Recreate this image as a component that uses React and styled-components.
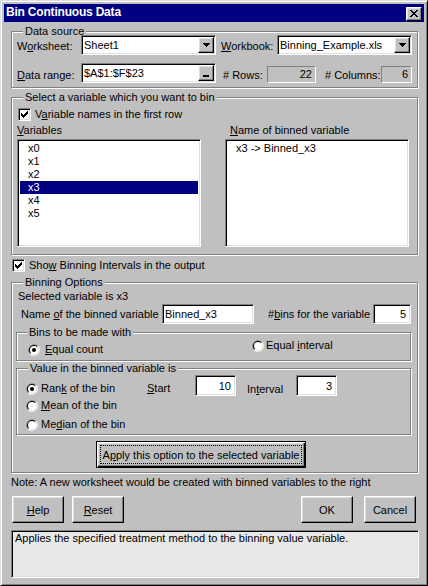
import React from 'react';
import styled, { createGlobalStyle, css } from 'styled-components';

const GlobalStyle = createGlobalStyle`
    html, body {
        margin: 0;
        padding: 0;
        background: #c0c0c0;
    }
    body {
        font-family: "Liberation Sans", Arial, sans-serif;
        font-size: 11px;
        color: #000;
    }
`;

const sunken = css`
    box-sizing: border-box;
    border: 1px solid;
    border-color: #808080 #fff #fff #808080;
    box-shadow: inset 1px 1px 0 #000, inset -1px -1px 0 #dfdfdf;
`;

const raised = css`
    box-sizing: border-box;
    border: 1px solid;
    border-color: #fff #000 #000 #fff;
    box-shadow: inset -1px -1px 0 #808080, inset 1px 1px 0 #dfdfdf;
`;

const Window = styled.div`
    box-sizing: border-box;
    width: 428px;
    height: 586px;
    padding: 3px;
    background: #c0c0c0;
    border: 1px solid;
    border-color: #dfdfdf #000 #000 #dfdfdf;
    box-shadow: inset 1px 1px 0 #fff, inset -1px -1px 0 #808080;
    display: flex;
    flex-direction: column;
`;

const TitleBar = styled.div`
    height: 18px;
    flex: none;
    display: flex;
    align-items: center;
    justify-content: space-between;
    padding: 0 2px;
    background: #000080;
    color: #fff;
    font-weight: bold;
    font-size: 12px;
    letter-spacing: -0.2px;
`;

const TitleText = styled.span`
    padding-bottom: 2px;
`;

const CloseButton = styled.div`
    ${raised};
    width: 16px;
    height: 14px;
    background: #c0c0c0;
    display: flex;
    align-items: center;
    justify-content: center;
    margin-top: 1px;
`;

const Group = styled.fieldset`
    box-sizing: border-box;
    min-width: 0;
    margin: ${({ $mt }) => $mt || 0}px 0 0 ${({ $ml }) => $ml || 0}px;
    width: ${({ $w }) => $w}px;
    padding: 0 4px ${({ $pb }) => $pb || 0}px ${({ $pl }) => $pl || 0}px;
    border: 1px solid #808080;
    box-shadow: inset 1px 1px 0 #fff, 1px 1px 0 #fff;
`;

const Legend = styled.legend`
    padding: 0 2px;
    margin-left: ${({ $ml }) => $ml}px;
    line-height: 8px;
    background: #c0c0c0;
`;

const Key = styled.span`
    text-decoration: underline;
`;

const FormRow = styled.div`
    display: flex;
    align-items: ${({ $align }) => $align || 'flex-start'};
    margin-top: ${({ $mt }) => $mt || 0}px;
    margin-left: ${({ $ml }) => $ml || 0}px;
`;

const FieldLabel = styled.div`
    flex: none;
    width: ${({ $w }) => $w}px;
    margin-left: ${({ $ml }) => $ml || 0}px;
    margin-top: ${({ $mt }) => $mt || 0}px;
    line-height: 13px;
    white-space: nowrap;
`;

const Field = styled.div`
    ${sunken};
    flex: none;
    width: ${({ $w }) => $w}px;
    height: ${({ $h }) => $h || 20}px;
    padding: 1px;
    background: #fff;
    display: flex;
    align-items: center;
`;

const FieldText = styled.div`
    flex: 1;
    padding: 0 ${({ $pr }) => $pr || 1}px 0 ${({ $pl }) => $pl || 1}px;
    text-align: ${({ $align }) => $align || 'left'};
    white-space: nowrap;
    overflow: hidden;
`;

const FieldButton = styled.div`
    ${raised};
    flex: none;
    width: 16px;
    height: 16px;
    background: #c0c0c0;
    display: flex;
    align-items: center;
    justify-content: center;
`;

const ReadBox = styled.div`
    box-sizing: border-box;
    flex: none;
    width: ${({ $w }) => $w}px;
    height: 17px;
    margin-top: 3px;
    border: 1px solid;
    border-color: #808080 #fff #fff #808080;
    padding-right: 3px;
    line-height: 15px;
    text-align: right;
`;

const Columns = styled.div`
    display: flex;
    gap: 24px;
    margin-top: 3px;
`;

const ListColumn = styled.div`
    display: flex;
    flex-direction: column;
`;

const ListCaption = styled.div`
    line-height: 13px;
    margin-left: ${({ $ml }) => $ml || 0}px;
    margin-bottom: 2px;
`;

const ListBox = styled.div`
    ${sunken};
    width: 184px;
    height: 108px;
    padding: 2px;
    background: #fff;
`;

const ListItem = styled.div`
    height: 13px;
    line-height: 13px;
    padding-left: 8px;
    background: ${({ $selected }) => ($selected ? '#000080' : 'transparent')};
    color: ${({ $selected }) => ($selected ? '#fff' : '#000')};
`;

const CheckRow = styled.label`
    display: flex;
    align-items: center;
    gap: 4px;
    height: 13px;
    line-height: 13px;
    margin-top: ${({ $mt }) => $mt || 0}px;
    margin-left: ${({ $ml }) => $ml || 0}px;
`;

const CheckBox = styled.span`
    ${sunken};
    flex: none;
    width: 13px;
    height: 13px;
    background: #fff;
    display: flex;
    align-items: center;
    justify-content: center;
`;

const Text = styled.div`
    line-height: 13px;
    margin-top: ${({ $mt }) => $mt || 0}px;
    margin-left: ${({ $ml }) => $ml || 0}px;
    white-space: nowrap;
`;

const BinsRow = styled.div`
    display: grid;
    grid-template-columns: 227px 1fr;
    align-items: start;
    padding-top: 3px;
`;

const RadioItem = styled.div`
    display: flex;
    align-items: center;
    gap: ${({ $gap }) => $gap || 4}px;
    height: 13px;
    line-height: 13px;
    margin-top: ${({ $mt }) => $mt || 0}px;
    margin-left: ${({ $ml }) => $ml || 0}px;
    white-space: nowrap;
`;

const ValueRow = styled.div`
    display: flex;
    align-items: flex-start;
    padding-top: 3px;
`;

const RadioColumn = styled.div`
    flex: none;
    width: 121px;
    padding-left: 1px;
    display: flex;
    flex-direction: column;
`;

const ApplyButton = styled.button`
    box-sizing: border-box;
    width: 210px;
    height: 27px;
    margin: 6px 0 0 80px;
    padding: 3px;
    font: inherit;
    color: #000;
    background: #c0c0c0;
    border: 1px solid #000;
    box-shadow: inset 1px 1px 0 #fff, inset -1px -1px 0 #000, inset -2px -2px 0 #808080, inset 2px 2px 0 #dfdfdf;
    display: flex;
`;

const FocusRect = styled.span`
    flex: 1;
    border: 1px dotted #000;
    display: flex;
    align-items: center;
    justify-content: center;
`;

const Note = styled.div`
    margin: 3px 0 0 7px;
    line-height: 13px;
    white-space: nowrap;
`;

const ButtonBar = styled.div`
    display: flex;
    margin-top: 7px;
    padding: 0 8px;
`;

const Button = styled.button`
    ${raised};
    width: 52px;
    height: 27px;
    padding: 0;
    margin-left: ${({ $ml }) => ($ml === 'auto' ? 'auto' : `${$ml || 0}px`)};
    font: inherit;
    color: #000;
    background: #c0c0c0;
`;

const StatusBox = styled.div`
    ${sunken};
    width: 408px;
    height: 48px;
    margin: 7px 0 0 7px;
    padding: 1px 3px;
    background: #e8e8e8;
    line-height: 13px;
`;

const DropArrow = () => (
    <svg width="7" height="4" viewBox="0 0 7 4" shapeRendering="crispEdges">
        <path d="M0 0h7v1h-7z M1 1h5v1h-5z M2 2h3v1h-3z M3 3h1v1h-1z" fill="#000" />
    </svg>
);

const CollapseGlyph = () => (
    <svg width="6" height="10" viewBox="0 0 6 10" shapeRendering="crispEdges">
        <path d="M0 7h6v2h-6z" fill="#000" />
    </svg>
);

const CloseGlyph = () => (
    <svg width="8" height="7" viewBox="0 0 8 7" shapeRendering="crispEdges">
        <path
            d="M0 0h2v1h-2z M6 0h2v1h-2z M1 1h2v1h-2z M5 1h2v1h-2z M2 2h4v1h-4z M3 3h2v1h-2z M2 4h4v1h-4z M1 5h2v1h-2z M5 5h2v1h-2z M0 6h2v1h-2z M6 6h2v1h-2z"
            fill="#000"
        />
    </svg>
);

const CheckGlyph = () => (
    <svg width="7" height="7" viewBox="0 0 7 7" shapeRendering="crispEdges">
        <path
            d="M6 0h1v1h-1z M5 1h2v1h-2z M0 2h1v1h-1z M4 2h3v1h-3z M0 3h2v1h-2z M3 3h3v1h-3z M0 4h5v1h-5z M1 5h3v1h-3z M2 6h1v1h-1z"
            fill="#000"
        />
    </svg>
);

const Radio = ({ checked }) => (
    <svg width="12" height="12" viewBox="0 0 12 12" style={{ flex: 'none' }}>
        <path d="M1.76 10.24A6 6 0 0 1 10.24 1.76Z" fill="#808080" />
        <path d="M10.24 1.76A6 6 0 0 1 1.76 10.24Z" fill="#fff" />
        <circle cx="6" cy="6" r="5" fill="#dfdfdf" />
        <path d="M2.46 9.54A5 5 0 0 1 9.54 2.46Z" fill="#000" />
        <circle cx="6" cy="6" r="4" fill="#fff" />
        {checked && <circle cx="6" cy="6" r="2" fill="#000" />}
    </svg>
);

const Combo = ({ value }) => (
    <Field $w={135}>
        <FieldText $pl={1}>{value}</FieldText>
        <FieldButton>
            <DropArrow />
        </FieldButton>
    </Field>
);

const App = () => {
    const variables = ['x0', 'x1', 'x2', 'x3', 'x4', 'x5'];

    return (
        <>
            <GlobalStyle />
            <Window>
                <TitleBar>
                    <TitleText>Bin Continuous Data</TitleText>
                    <CloseButton>
                        <CloseGlyph />
                    </CloseButton>
                </TitleBar>

                <Group $mt={5} $ml={7} $w={407} $pl={5} $pb={4}>
                    <Legend $ml={6}>Data source</Legend>
                    <FormRow>
                        <FieldLabel $w={64} $mt={5}>W<Key>o</Key>rksheet:</FieldLabel>
                        <Combo value="Sheet1" />
                        <FieldLabel $w={56} $ml={5} $mt={5}><Key>W</Key>orkbook:</FieldLabel>
                        <Combo value="Binning_Example.xls" />
                    </FormRow>
                    <FormRow $mt={8}>
                        <FieldLabel $w={64} $mt={6}><Key>D</Key>ata range:</FieldLabel>
                        <Field $w={135}>
                            <FieldText $pl={1}>$A$1:$F$23</FieldText>
                            <FieldButton>
                                <CollapseGlyph />
                            </FieldButton>
                        </Field>
                        <FieldLabel $w={44} $ml={7} $mt={6}># Rows:</FieldLabel>
                        <ReadBox $w={49}>22</ReadBox>
                        <FieldLabel $w={56} $ml={9} $mt={6}># Columns:</FieldLabel>
                        <ReadBox $w={31}>6</ReadBox>
                    </FormRow>
                </Group>

                <Group $mt={5} $ml={7} $w={407} $pl={5} $pb={7}>
                    <Legend $ml={6}>Select a variable which you want to bin</Legend>
                    <CheckRow $mt={7} $ml={1}>
                        <CheckBox>
                            <CheckGlyph />
                        </CheckBox>
                        <span>V<Key>a</Key>riable names in the first row</span>
                    </CheckRow>
                    <Columns>
                        <ListColumn>
                            <ListCaption><Key>V</Key>ariables</ListCaption>
                            <ListBox>
                                {variables.map((v) => (
                                    <ListItem key={v} $selected={v === 'x3'}>{v}</ListItem>
                                ))}
                            </ListBox>
                        </ListColumn>
                        <ListColumn>
                            <ListCaption $ml={5}><Key>N</Key>ame of binned variable</ListCaption>
                            <ListBox>
                                <ListItem>x3 -&gt; Binned_x3</ListItem>
                            </ListBox>
                        </ListColumn>
                    </Columns>
                </Group>

                <CheckRow $mt={4} $ml={8}>
                    <CheckBox>
                        <CheckGlyph />
                    </CheckBox>
                    <span>Sho<Key>w</Key> Binning Intervals in the output</span>
                </CheckRow>

                <Group $mt={6} $ml={7} $w={407} $pl={4} $pb={4}>
                    <Legend $ml={7}>Binning Options</Legend>
                    <Text $mt={4} $ml={2}>Selected variable is x3</Text>
                    <FormRow $mt={1} $align="center">
                        <FieldLabel $w={141} $ml={5}>Name <Key>o</Key>f the binned variable</FieldLabel>
                        <Field $w={92}>
                            <FieldText $pl={1}>Binned_x3</FieldText>
                        </Field>
                        <FieldLabel $w={105} $ml={14}>#<Key>b</Key>ins for the variable</FieldLabel>
                        <Field $w={38}>
                            <FieldText $align="right" $pr={3}>5</FieldText>
                        </Field>
                    </FormRow>

                    <Group $mt={4} $w={395} $pl={8} $pb={4}>
                        <Legend $ml={2}>Bins to be made with</Legend>
                        <BinsRow>
                            <RadioItem $mt={4} $ml={3} $gap={5}>
                                <Radio checked />
                                <span><Key>E</Key>qual count</span>
                            </RadioItem>
                            <RadioItem $gap={2}>
                                <Radio />
                                <span>Equal <Key>i</Key>nterval</span>
                            </RadioItem>
                        </BinsRow>
                    </Group>

                    <Group $mt={3} $w={395} $pl={8} $pb={3}>
                        <Legend $ml={3}>Value in the binned variable is</Legend>
                        <ValueRow>
                            <RadioColumn>
                                <RadioItem $mt={7} $gap={3}>
                                    <Radio checked />
                                    <span>Ran<Key>k</Key> of the bin</span>
                                </RadioItem>
                                <RadioItem $mt={4} $gap={3}>
                                    <Radio />
                                    <span><Key>M</Key>ean of the bin</span>
                                </RadioItem>
                                <RadioItem $mt={6} $gap={3}>
                                    <Radio />
                                    <span>Me<Key>d</Key>ian of the bin</span>
                                </RadioItem>
                            </RadioColumn>
                            <FieldLabel $w={48} $mt={7}><Key>S</Key>tart</FieldLabel>
                            <Field $w={41} $h={21}>
                                <FieldText $align="right" $pr={3}>10</FieldText>
                            </Field>
                            <FieldLabel $w={49} $ml={11} $mt={8}>In<Key>t</Key>erval</FieldLabel>
                            <Field $w={41} $h={21}>
                                <FieldText $align="right" $pr={3}>3</FieldText>
                            </Field>
                        </ValueRow>
                    </Group>

                    <ApplyButton>
                        <FocusRect>A<Key>p</Key>ply this option to the selected variable</FocusRect>
                    </ApplyButton>
                </Group>

                <Note>Note: A new worksheet would be created with binned variables to the right</Note>

                <ButtonBar>
                    <Button><Key>H</Key>elp</Button>
                    <Button $ml={8}><Key>R</Key>eset</Button>
                    <Button $ml="auto">OK</Button>
                    <Button $ml={11}>Cancel</Button>
                </ButtonBar>

                <StatusBox>Applies the specified treatment method to the binning value variable.</StatusBox>
            </Window>
        </>
    );
};

export default App;
